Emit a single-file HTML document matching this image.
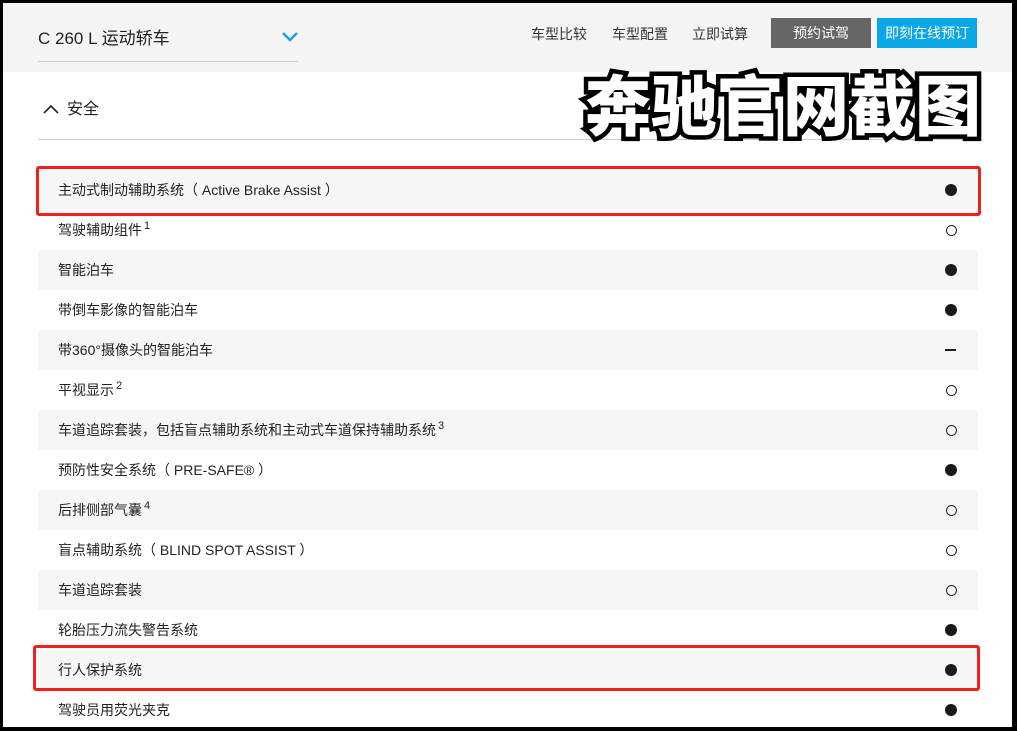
<!DOCTYPE html>
<html><head><meta charset="utf-8"><style>
*{margin:0;padding:0;box-sizing:border-box}
body{width:1017px;height:731px;background:#000;position:relative;overflow:hidden;font-family:"Liberation Sans","Noto Sans CJK SC",sans-serif;color:#333}
#pg{position:absolute;left:3px;top:3px;width:1009px;height:724px;background:#fff;overflow:hidden}
#hd{position:absolute;left:0;top:0;width:1009px;height:69px;background:#f4f4f4}
.model{position:absolute;left:35px;top:21px;font-size:17px;color:#222}
.uline{position:absolute;left:35px;top:58px;width:260px;height:1px;background:#ccc}
.chev{position:absolute;left:278px;top:28px}
.nav{position:absolute;top:21px;font-size:14px;color:#333}
.btn{position:absolute;top:15px;height:30px;line-height:30px;text-align:center;color:#fff;font-size:14px}
.sec{position:absolute;left:40px;top:92px;font-size:16px;color:#222}
.sl{position:absolute;left:35px;top:136px;width:940px;height:1px;background:#ccc}
.row{position:absolute;left:35px;width:940px;height:40px;font-size:14px;line-height:40px;padding-left:20px;color:#222}
.g{background:#f6f6f6}
.row sup{font-size:11px;line-height:0;vertical-align:baseline;position:relative;top:-6px;margin-left:2px}
.m{position:absolute;left:907px;top:14px;width:12px;height:12px;border-radius:50%}
.f{background:#1a1a1a}
.o{border:1px solid #222;width:11px;height:11px;top:15px;left:908px}
.d{position:absolute;left:907px;top:19px;width:11px;height:2px;background:#222}
.red{position:absolute;border:3px solid #f0201a;border-radius:3px}
.wm{position:absolute;left:582px;top:59px;font-size:66px;font-weight:900;color:#fff;-webkit-text-stroke:9px #000;paint-order:stroke fill;font-family:"Noto Sans CJK SC",sans-serif;line-height:80px}
</style></head><body><div id="pg">
<div id="hd">
<div class="model">C 260 L 运动轿车</div>
<svg class="chev" width="18" height="12" viewBox="0 0 18 12"><path d="M2 2 L9 9 L16 2" fill="none" stroke="#1aa0dc" stroke-width="2.5"/></svg>
<div class="uline"></div>
<div class="nav" style="left:528px">车型比较</div>
<div class="nav" style="left:609px">车型配置</div>
<div class="nav" style="left:689px">立即试算</div>
<div class="btn" style="left:768px;width:100px;background:#666">预约试驾</div>
<div class="btn" style="left:874px;width:100px;background:#0aa8e6">即刻在线预订</div>
</div>
<div class="sec"><svg width="16" height="10" viewBox="0 0 16 10" style="margin-right:8px"><path d="M1 9 L8 2 L15 9" fill="none" stroke="#222" stroke-width="1.6"/></svg>安全</div>
<div class="sl"></div>

<div class="row g" style="top:167px">主动式制动辅助系统（ Active Brake Assist ）<span class="m f"></span></div>
<div class="row" style="top:207px">驾驶辅助组件<sup>1</sup><span class="m o"></span></div>
<div class="row g" style="top:247px">智能泊车<span class="m f"></span></div>
<div class="row" style="top:287px">带倒车影像的智能泊车<span class="m f"></span></div>
<div class="row g" style="top:327px">带360°摄像头的智能泊车<span class="d"></span></div>
<div class="row" style="top:367px">平视显示<sup>2</sup><span class="m o"></span></div>
<div class="row g" style="top:407px">车道追踪套装，包括盲点辅助系统和主动式车道保持辅助系统<sup>3</sup><span class="m o"></span></div>
<div class="row" style="top:447px">预防性安全系统（ PRE-SAFE® ）<span class="m f"></span></div>
<div class="row g" style="top:487px">后排侧部气囊<sup>4</sup><span class="m o"></span></div>
<div class="row" style="top:527px">盲点辅助系统（ BLIND SPOT ASSIST ）<span class="m o"></span></div>
<div class="row g" style="top:567px">车道追踪套装<span class="m o"></span></div>
<div class="row" style="top:607px">轮胎压力流失警告系统<span class="m f"></span></div>
<div class="row g" style="top:647px">行人保护系统<span class="m f"></span></div>
<div class="row" style="top:687px">驾驶员用荧光夹克<span class="m f"></span></div>

<div class="red" style="left:33px;top:163px;width:945px;height:50px"></div>
<div class="red" style="left:30px;top:642px;width:947px;height:46px"></div>
<div class="wm">奔驰官网截图</div>
</div></body></html>
